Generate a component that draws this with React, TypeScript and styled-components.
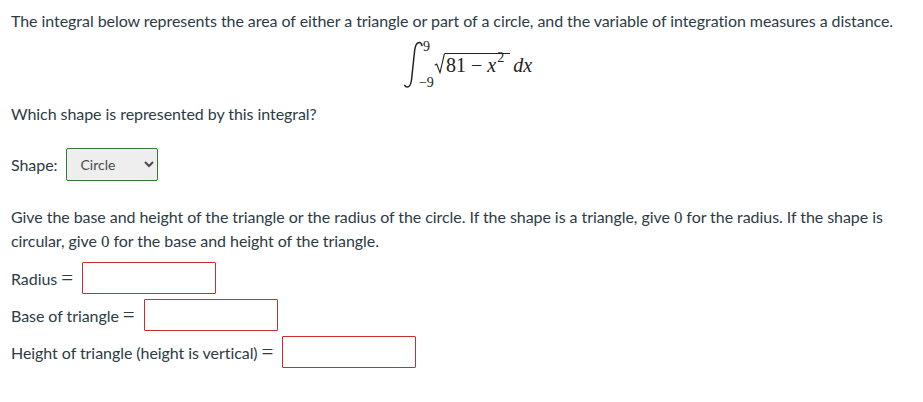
import styled, { createGlobalStyle } from "styled-components";

const Global = createGlobalStyle`
  html, body { margin: 0; padding: 0; background: #fff; }
  body {
    font-family: Lato, "Open Sans", sans-serif;
    font-size: 16px;
    letter-spacing: -0.06px;
    color: #2d3b45;
  }
`;

const Page = styled.div`
  padding: 9px 11px;
`;

const Text = styled.p<{ $mt?: number }>`
  margin: ${(p) => p.$mt ?? 0}px 0 0;
  line-height: 23px;
`;

const MathNum = styled.span`
  font-family: "Liberation Serif", serif;
  font-size: 17px;
`;

const Display = styled.div`
  display: flex;
  justify-content: center;
  align-items: flex-start;
  height: 70px;
  padding-left: 11px;
  font-family: "Liberation Serif", serif;
  letter-spacing: 0;
  color: #222;
`;

const IntSign = styled.div`
  position: relative;
  width: 32px;
  height: 48px;
  margin-top: 9px;
`;

const Limit = styled.span<{ $top: number; $left: number }>`
  position: absolute;
  top: ${(p) => p.$top}px;
  left: ${(p) => p.$left}px;
  font-size: 14px;
  line-height: 14px;
`;

const Root = styled.span`
  display: inline-flex;
  align-items: flex-start;
  margin-top: 21px;
`;

const Radicand = styled.span`
  border-top: 1px solid #222;
  padding: 1px 6px 0 1px;
  font-size: 20px;
  line-height: 20px;
  white-space: nowrap;
`;

const Var = styled.span`
  font-family: "Liberation Serif", serif;
  font-style: italic;
`;

const Sup = styled.sup`
  font-size: 14px;
  vertical-align: 10px;
  line-height: 0;
  margin-left: 1px;
`;

const Dx = styled.span`
  font-size: 20px;
  line-height: 20px;
  font-style: italic;
  margin-left: 3px;
  margin-top: 23px;
`;

const Row = styled.div<{ $mt: number }>`
  display: flex;
  align-items: center;
  gap: 9px;
  margin-top: ${(p) => p.$mt}px;
  line-height: 23px;
`;

const Select = styled.select`
  width: 92px;
  height: 33px;
  padding: 0 4px 0 9px;
  font-family: Lato, sans-serif;
  font-size: 14px;
  color: #4a4a4a;
  background: #eee;
  border: 1px solid #2f7a36;
  border-radius: 2px;
`;

const Input = styled.input`
  width: 134px;
  height: 32px;
  box-sizing: border-box;
  border: 1px solid #c62f2f;
  border-radius: 1px;
  background: #fff;
  font: inherit;
  padding: 0 6px;
`;

const Eq = styled.span`
  font-family: "Liberation Serif", serif;
  font-size: 21px;
  line-height: 1;
  margin-left: 4px;
  color: #2d3b45;
`;

export default function App() {
  return (
    <>
      <Global />
      <Page>
        <Text>
          The integral below represents the area of either a triangle or part of a circle, and the variable of
          integration measures a distance.
        </Text>
        <Display>
          <IntSign>
            <svg width="22" height="48" viewBox="0 0 22 48" style={{ position: "absolute", left: 0, top: 0 }}>
              <path
                d="M20 4.5c-.4-1.8-1.4-3-2.7-3-2.8 0-4 3.3-4.6 7.5L9.5 39c-.6 4.3-1.9 7-4.3 7-1.2 0-2-.7-2.5-1.6"
                fill="none"
                stroke="#222"
                strokeWidth="1.5"
                strokeLinecap="round"
              />
            </svg>
            <Limit $top={-1} $left={21}>9</Limit>
            <Limit $top={35} $left={17}>−9</Limit>
          </IntSign>
          <Root>
            <svg width="11" height="21" viewBox="0 0 11 21">
              <path d="M.8 12.2l1.9-1.1 3.3 8.6L10.5.5" fill="none" stroke="#222" strokeWidth="1.1" />
            </svg>
            <Radicand>
              81 − <Var>x</Var>
              <Sup>2</Sup>
            </Radicand>
          </Root>
          <Dx>dx</Dx>
        </Display>
        <Text>Which shape is represented by this integral?</Text>
        <Row $mt={23}>
          <span>Shape:</span>
          <Select defaultValue="circle">
            <option value="triangle">Triangle</option>
            <option value="circle">Circle</option>
          </Select>
        </Row>
        <Text $mt={24}>
          Give the base and height of the triangle or the radius of the circle. If the shape is a triangle, give{" "}
          <MathNum>0</MathNum> for the radius. If the shape is circular, give <MathNum>0</MathNum> for the base and
          height of the triangle.
        </Text>
        <Row $mt={9}>
          <span>
            Radius<Eq>=</Eq>
          </span>
          <Input aria-label="Radius" />
        </Row>
        <Row $mt={5}>
          <span>
            Base of triangle<Eq>=</Eq>
          </span>
          <Input aria-label="Base of triangle" />
        </Row>
        <Row $mt={5}>
          <span>
            Height of triangle (height is vertical)<Eq>=</Eq>
          </span>
          <Input aria-label="Height of triangle" />
        </Row>
      </Page>
    </>
  );
}
